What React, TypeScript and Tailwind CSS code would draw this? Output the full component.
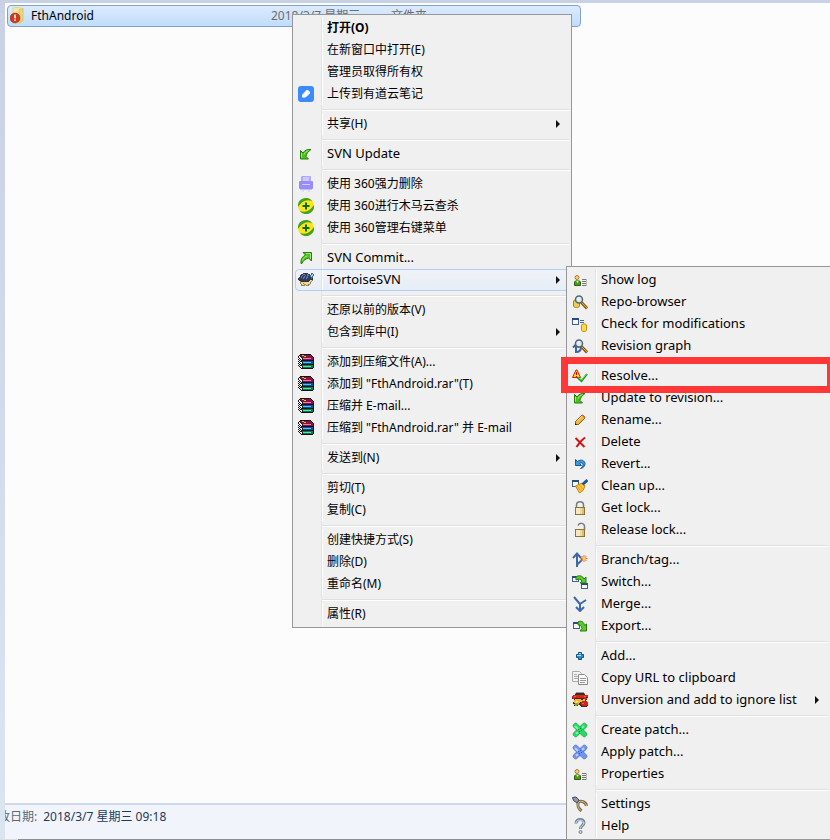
import type { ReactNode } from 'react'
import clsx from 'clsx'

type Item = { label: string; icon?: ReactNode; bold?: boolean; latin?: boolean; arrow?: boolean; sub?: Item[][] }

function Svg({ children }: { children: ReactNode }) {
  return (
    <svg width="16" height="16" viewBox="0 0 16 16" fill="none" aria-hidden="true">{children}</svg>
  )
}

// small bitmap icons: one character per pixel, looked up in a palette
function Pixels({ rows, palette }: { rows: string[]; palette: Record<string, string> }) {
  return (
    <svg width="16" height="16" viewBox="0 0 16 16" shapeRendering="crispEdges" aria-hidden="true">
      {rows.flatMap((row, y) =>
        [...row].map((c, x) => palette[c] && <rect key={`${x}-${y}`} x={x} y={y} width="1" height="1" fill={palette[c]} />),
      )}
    </svg>
  )
}

/* ---------- icons ---------- */

const note = (
  <Svg>
    <rect width="16" height="16" rx="3" fill="#3b8bff" />
    <path d="M4 11.500V9l4.500-5H10l2 2v1.500L7.500 11.500z" fill="#fff" />
  </Svg>
)

const arrowDown = (
  <Svg>
    <path d="M2.500 4.500v8.500h8L8 10.500C8.500 7.500 10 5.500 13 3.500c-4-.5-6.500 1-8 3.500z" fill="#4fc01c" stroke="#23800c" />
    <path d="M3.500 7v4.500M6 8.500C7 6.500 8.500 5 10.500 4.500" stroke="#a2ea74" />
  </Svg>
)

const arrowUp = (
  <Svg>
    <path d="M13.500 11V2.500h-8.500L7.500 5C4.500 6.500 2.500 9 3 13.500h1C5 11 7 9 10.500 8z" fill="#4fc01c" stroke="#23800c" />
    <path d="M12.500 9V3.500H8M4.500 10.500C5.500 8 7 6.500 9.500 6" stroke="#a2ea74" />
  </Svg>
)

const shredder = (
  <Svg>
    <rect x="3" y="0" width="10" height="6" rx="1" fill="#b3a8f8" />
    <rect x="1" y="5" width="14" height="8" rx="1" fill="#9a8cf8" />
    <path d="M5 1h6v4H5z" fill="#cfc7ff" />
    <path d="M4 8.500h8" stroke="#d5ceff" />
    <path d="M2 13h12v1H2z" fill="#c5bcff" />
    <path d="M4 15h2M10 15h2" stroke="#cfc7ff" />
  </Svg>
)

const shield360 = (
  <Svg>
    <circle cx="8" cy="8" r="8" fill="#ffe51a" />
    <path d="M0 9A8 8 0 0 1 14.500 3.500C9 .5 4 3 0 9z" fill="#3fa325" />
    <path d="M16 7A8 8 0 0 1 1.500 12.500C7 15.500 12 13 16 7z" fill="#3fa325" />
    <path d="M8 4.500v7M4.500 8h7" stroke="#0c6b18" strokeWidth="2" />
  </Svg>
)

const tortoise = (
  <Pixels
    palette={{ d: '#2f3c5e', u: '#66779f', t: '#2c6f96', h: '#9fd4ee', k: '#3a3020', c: '#e6d9a8', n: '#9a8148' }}
    rows={[
      '',
      '.....ddddd...tt.',
      '...dduuddudd.tht',
      '..ddudduduudthht',
      '..duddudduddtht.',
      '.dduduuduudddtt.',
      'dddddudduddddtk.',
      'kddddddddddddkk.',
      '.kkddddddddkccn.',
      '..nkkkkkkkkccn..',
      '..ncccccccccn...',
      '..nccnccccccn...',
      '...nccnnccnn....',
      '...nnnn.nnn.....',
    ]}
  />
)

const rar = (
  <Pixels
    palette={{ k: '#141414', m: '#8a1245', p: '#f27ab0', w: '#f4f4f4', y: '#d8c520', b: '#0f4f9f', c: '#5cc0f4', g: '#0b7a4d', l: '#56e6a4' }}
    rows={[
      '..kkkkkkkkkkk...',
      '.kmmyymmmmmmmk..',
      'kwkmmmyymmmmmmk.',
      'kwwkmmmmmmmmmmmk',
      '.kwwkppppppppmmk',
      'kwkwkmmmmmmmmmmk',
      '.kwkkkkkkkkkkkkk',
      'kwkkbbbbbbbbbbbk',
      '.kwwkccccccccbbk',
      'kwkwkbbbbbbbbbbk',
      '.kwkkkkkkkkkkkkk',
      'kwkkgggggggggggk',
      '.kwwkllllllllggk',
      '..kwkggggggggggk',
      '...kkkkkkkkkkkk.',
    ]}
  />
)

const person = (
  <Svg>
    <circle cx="5" cy="5.500" r="2" fill="#f6d080" stroke="#b07a2c" />
    <path d="M2.500 13.500V10l1.500-1.500h3L8.500 10v3.500z" fill="#4f9a20" stroke="#28600c" />
    <path d="M4 8.500l1.500 2.500L7 8.500z" fill="#e8f4d8" />
    <path d="M10 7.500h4M10 9.500h5M10 11.500h4M10 13.500h5" stroke="#777" />
    <path d="M14.500 7v7" stroke="#bbb" />
  </Svg>
)

const glass = (
  <>
    <circle cx="7" cy="5.500" r="3.500" fill="#d5ebfa" stroke="#55636f" strokeWidth="1.500" />
    <path d="M5.500 5.500c0-1 1-2 2-2" stroke="#fff" />
    <path d="M9.500 8.500l5.500 6" stroke="#8b5a14" strokeWidth="3" />
    <path d="M10 9l5 5" stroke="#e2a93c" />
  </>
)

const repo = (
  <Svg>
    <path d="M1.500 7c0-1.500 6-1.500 6 0v5c0 2-6 2-6 0z" fill="#f0cc50" stroke="#a9801a" />
    {glass}
  </Svg>
)

const graph = (
  <Svg>
    <path d="M4 15V7M1 9.500L4 6.500l3 3M4 14c4 0 5-3 5-5" stroke="#3d669f" strokeWidth="2" />
    {glass}
  </Svg>
)

const win = (
  <>
    <rect x=".5" y="2.500" width="6" height="6" fill="#f4f8ff" stroke="#41608f" />
    <path d="M0 3h7" stroke="#2a4a80" strokeWidth="2" />
  </>
)

const check = (
  <Svg>
    {win}
    <path d="M8 4.500h4M8 6.500h4" stroke="#46699c" />
    <path d="M9.500 9c0-1.500 5-1.500 5 0v5c0 2-5 2-5 0z" fill="#ffd84d" stroke="#c39114" />
  </Svg>
)

const resolve = (
  <Svg>
    <path d="M.5 9.500L4 2h1l3.500 7.500z" fill="#ffe600" stroke="#e01010" strokeLinejoin="round" />
    <path d="M4.500 4v3M4.500 8v1" stroke="#d00" />
    <path d="M5.500 9.500l4 3.500 5.500-7" stroke="#0f9e1c" strokeWidth="2" />
    <path d="M6.500 9.500l3 2.500 5-6" stroke="#65e060" />
  </Svg>
)

const pencil = (
  <Svg>
    <path d="M3.500 12.500v-3l6-6c1.500-1 4 1 3 3l-6 6z" fill="#f5b640" stroke="#8f5718" />
    <path d="M5 9l5-5" stroke="#fff0a8" />
    <path d="M10 3.500c1.500-.5 3 1 2.500 2.500z" fill="#d85252" />
    <path d="M3 13v-2l2 2z" fill="#222" />
  </Svg>
)

const del = (
  <Svg>
    <path d="M3.500 4l9 9M13 3.500c-4 3-6 5.500-8.500 9.500" stroke="#cf1414" strokeWidth="2" />
  </Svg>
)

const revert = (
  <Svg>
    <path d="M3.500 3.500v6h6L7.500 7.500C9.500 6 11 7 11 8.500c0 1.500-1 3-2.500 4 3-.5 4.500-2.500 4.500-5S9.500 2.500 5.500 5.500z" fill="#3f9be0" stroke="#155a96" />
  </Svg>
)

const clean = (
  <Svg>
    {win}
    <path d="M3.500 8L10 5l3 3-2 4.500-3.500 2.500z" fill="#ffc83a" stroke="#c68312" />
    <path d="M5.500 8.500l3 4M7.500 7l3 4" stroke="#e39a1c" />
    <path d="M10.500 6.500L15.500 2" stroke="#1e5596" strokeWidth="3" />
  </Svg>
)

const lockBody = (
  <>
    <rect x="3.500" y="7.500" width="9" height="7" fill="#ecd9a4" stroke="#8d7433" />
    <path d="M5 8v6M7 8v6" stroke="#fff8df" />
    <path d="M11 8v6" stroke="#c2a558" />
  </>
)

const lock = (
  <Svg>
    <path d="M4.500 7.500V5C4.500 .5 11.500 .5 11.500 5v2.500" stroke="#777b80" strokeWidth="1.500" />
    {lockBody}
  </Svg>
)

const unlock = (
  <Svg>
    <path d="M6 3.500C7.500 0 12.500 1 12.500 4.500V8" stroke="#777b80" strokeWidth="1.500" />
    {lockBody}
  </Svg>
)

const branch = (
  <Svg>
    <path d="M5 15V3M1 6l4-4.500L9 6M5 13.500c1-4 5-3 5-7" stroke="#3f69a6" strokeWidth="2" />
    <path d="M12 3v7M8.500 6.500h7M9.500 4l5 5M14.500 4l-5 5" stroke="#ff6426" />
    <circle cx="12" cy="6.500" r="1.500" fill="#ffd64a" />
  </Svg>
)

const switchIcon = (
  <Svg>
    <rect x=".5" y="2.500" width="6" height="5" fill="#f4f8ff" stroke="#41608f" />
    <path d="M0 3h7" stroke="#2a4a80" strokeWidth="2" />
    <path d="M4 3C7 .5 11 2 12 5l2-2v6H8l2-2C9 5 7 4.500 4 6z" fill="#5ccc28" stroke="#267d0c" />
    <rect x="9.500" y="9.500" width="6" height="5" fill="#f4f8ff" stroke="#41608f" />
    <path d="M9 10h7" stroke="#2a4a80" strokeWidth="2" />
  </Svg>
)

const merge = (
  <Svg>
    <path d="M2 1l5.500 6.500M14 4L8 8v6.500M4 11l4 4 4-4" stroke="#3f69a6" strokeWidth="2" />
  </Svg>
)

const exportIcon = (
  <Svg>
    <rect x="1.500" y="4.500" width="6" height="6" fill="#f4f8ff" stroke="#41608f" />
    <path d="M1 5h7" stroke="#2a4a80" strokeWidth="2" />
    <path d="M6 4C9 2 12 4 12.500 7.500l2-1.500v7H8l2-2.500C9.500 8 8.500 6.500 6 7z" fill="#5ccc28" stroke="#267d0c" />
  </Svg>
)

const add = (
  <Svg>
    <path d="M6.500 4.500h3v2h2v3h-2v2h-3v-2h-2v-3h2z" fill="#2f93d0" stroke="#12507e" />
    <path d="M7 5.500h2M5 7.500h4" stroke="#a6ddf8" />
  </Svg>
)

const copy = (
  <Svg>
    <path d="M.5 1.500h7l2 2v8h-9z" fill="#f2f2f2" stroke="#aaa" />
    <path d="M2 4.500h3M2 6.500h4M2 8.500h4" stroke="#aaa" />
    <path d="M6.500 4.500h6l3 3v7h-9z" fill="#fafafa" stroke="#8c8c8c" />
    <path d="M8 8.500h6M8 10.500h6M8 12.500h5" stroke="#999" />
  </Svg>
)

const unversion = (
  <Pixels
    palette={{ s: '#9a9a9a', k: '#3c2a24', r: '#d8231a', R: '#f4564a', y: '#f3bb32', a: '#fbe388', g: '#86a824' }}
    rows={[
      '....ssssssss....',
      '...skkkkkkkks...',
      '...kkkkkkkkkk...',
      '.rrrrrrrrrrrrrrr',
      'rrRRrrrrrrrrRRrr',
      'rrrrrrrrrrrrrrkk',
      'krrkkkkkkkkkrrr.',
      '..kyyyyyykkyyrk.',
      '..yyyyyyyyyyyk..',
      '..yyaayyyyrrrrr.',
      '.kyaayyykrrrrrrr',
      '.kkgggykkrRRrrrr',
      '..gggggkkrrrrrrr',
      '..kggk..kkrrrrrk',
      '.........kkkkkk.',
    ]}
  />
)

// two crossed plasters
function Patch({ fill, dark, light }: { fill: string; dark: string; light: string }) {
  return (
    <Svg>
      <rect x="-.5" y="5.500" width="17" height="5" rx="2" transform="rotate(-45 8 8)" fill={fill} stroke={dark} strokeWidth=".5" />
      <rect x="-.5" y="5.500" width="17" height="5" rx="2" transform="rotate(45 8 8)" fill={fill} stroke={dark} strokeWidth=".5" />
      <path d="M3 4l3 3M10 6l2-2M4 12l2-2" stroke={light} strokeWidth="2" />
      <path d="M8 6.500h1M9 8.500h1M7 9.500h1M6 7.500h1" stroke={dark} />
    </Svg>
  )
}

const settings = (
  <Svg>
    <path d="M6 6C9 4.500 14 5.500 14.500 10M6.500 6C5 10 6 12 9.500 15" stroke="#7c6a45" strokeWidth="3" />
    <path d="M6 6C9 4.500 14 5.500 14.500 10M6.500 6C5 10 6 12 9.500 15" stroke="#d9c594" />
    <path d="M.5 1.500l1 3L5 7l2-3-3-3z" fill="#8d9bb0" stroke="#3c4658" />
  </Svg>
)

const help = (
  <Svg>
    <path d="M4 5.500C4 0 12.500 .5 12 5c-.3 2.500-3.500 2.500-3.500 6" stroke="#6f8399" strokeWidth="3" />
    <path d="M4 5c0-4 8-3.500 8 0-.3 2.500-3.500 2.500-3.500 5.500" stroke="#dce7f1" />
    <circle cx="8.500" cy="14" r="1.500" fill="#c5d4e2" stroke="#6f8399" />
  </Svg>
)

/* ---------- menu data, one array per group ---------- */

const svnMenu: Item[][] = [
  [
    { label: 'Show log', icon: person },
    { label: 'Repo-browser', icon: repo },
    { label: 'Check for modifications', icon: check },
    { label: 'Revision graph', icon: graph },
  ],
  [
    { label: 'Resolve...', icon: resolve },
    { label: 'Update to revision...', icon: arrowDown },
    { label: 'Rename...', icon: pencil },
    { label: 'Delete', icon: del },
    { label: 'Revert...', icon: revert },
    { label: 'Clean up...', icon: clean },
    { label: 'Get lock...', icon: lock },
    { label: 'Release lock...', icon: unlock },
  ],
  [
    { label: 'Branch/tag...', icon: branch },
    { label: 'Switch...', icon: switchIcon },
    { label: 'Merge...', icon: merge },
    { label: 'Export...', icon: exportIcon },
  ],
  [
    { label: 'Add...', icon: add },
    { label: 'Copy URL to clipboard', icon: copy },
    { label: 'Unversion and add to ignore list', icon: unversion, arrow: true },
  ],
  [
    { label: 'Create patch...', icon: <Patch fill="#2bd765" dark="#128a3a" light="#7df0a2" /> },
    { label: 'Apply patch...', icon: <Patch fill="#6f95f5" dark="#3558b8" light="#b9cdff" /> },
    { label: 'Properties', icon: person },
  ],
  [
    { label: 'Settings', icon: settings },
    { label: 'Help', icon: help },
  ],
]

const mainMenu: Item[][] = [
  [
    { label: '打开(O)', bold: true },
    { label: '在新窗口中打开(E)' },
    { label: '管理员取得所有权' },
    { label: '上传到有道云笔记', icon: note },
  ],
  [{ label: '共享(H)', arrow: true }],
  [{ label: 'SVN Update', icon: arrowDown, latin: true }],
  [
    { label: '使用 360强力删除', icon: shredder },
    { label: '使用 360进行木马云查杀', icon: shield360 },
    { label: '使用 360管理右键菜单', icon: shield360 },
  ],
  [
    { label: 'SVN Commit...', icon: arrowUp, latin: true },
    { label: 'TortoiseSVN', icon: tortoise, latin: true, arrow: true, sub: svnMenu },
  ],
  [{ label: '还原以前的版本(V)' }, { label: '包含到库中(I)', arrow: true }],
  [
    { label: '添加到压缩文件(A)...', icon: rar },
    { label: '添加到 "FthAndroid.rar"(T)', icon: rar },
    { label: '压缩并 E-mail...', icon: rar },
    { label: '压缩到 "FthAndroid.rar" 并 E-mail', icon: rar },
  ],
  [{ label: '发送到(N)', arrow: true }],
  [{ label: '剪切(T)' }, { label: '复制(C)' }],
  [{ label: '创建快捷方式(S)' }, { label: '删除(D)' }, { label: '重命名(M)' }],
  [{ label: '属性(R)' }],
]

/* ---------- menu ---------- */

function Menu({ groups, className }: { groups: Item[][]; className: string }) {
  return (
    <div role="menu" className={clsx('absolute border border-[#979797] bg-[#f0f0f0] p-0.5', className)}>
      {groups.map((group, i) => (
        <div key={i}>
          {i > 0 && (
            <div role="separator" className="flex h-2 items-end">
              <div className="h-full w-[27px] border-r border-[#e2e3e3]" />
              <div className="mb-0.5 h-0.5 flex-1 border-b border-white bg-[#e0e0e0]" />
            </div>
          )}
          {group.map(item => (
            <div key={item.label} className="relative">
              <button
                role="menuitem"
                className={clsx(
                  'flex h-[22px] w-full items-center text-left',
                  item.sub && 'rounded-sm bg-gradient-to-b from-[#f0f3f8] to-[#e6edf7] outline outline-1 -outline-offset-1 outline-[#aecff7]',
                )}
              >
                <span className="flex h-full w-[27px] shrink-0 items-center border-r border-[#e2e3e3] pl-[3px] shadow-[1px_0_0_#fff]">
                  {item.icon}
                </span>
                <span className={clsx('flex-1 pl-[5px] whitespace-nowrap', item.bold && 'font-bold', item.latin && 'text-[13px]')}>
                  {item.label}
                </span>
                {item.arrow && (
                  <svg width="4" height="8" viewBox="0 0 4 8" className="mr-[9px]" aria-hidden="true">
                    <path d="M0 0l4 4-4 4z" fill="#111" />
                  </svg>
                )}
              </button>
              {item.sub && (
                <>
                  <Menu groups={item.sub} className="-top-[3px] left-[271px] z-10 w-[265px] text-[13px]" />
                  {/* marks the Resolve entry */}
                  <div className="pointer-events-none absolute top-[88px] left-[266px] z-20 h-9 w-[273px] border-[7px] border-[#ff3737]" />
                </>
              )}
            </div>
          ))}
        </div>
      ))}
    </div>
  )
}

export default function App() {
  return (
    <div className="relative flex min-h-screen flex-col overflow-hidden bg-[#fcfcfc] font-['Noto_Sans','Noto_Sans_CJK_SC',sans-serif] text-xs text-black">
      <div className="h-[3px] bg-[#c9d1e4]" />
      <div className="flex flex-1">
        <div className="w-[5px] bg-gradient-to-b from-[#c9d1e4] to-[#dbe5f2]" />
        <div className="flex flex-1 flex-col">
          <main className="flex-1 px-0.5 pt-0.5">
            <div className="flex h-[22px] w-[574px] items-center rounded-sm border border-[#7da2ce] bg-gradient-to-b from-[#dcebfd] to-[#c1dcfc] pl-0.5">
              <svg width="16" height="18" viewBox="0 0 16 18" aria-hidden="true">
                <path d="M3 1l7-1v16H3z" fill="#f6e7a0" stroke="#e6d384" />
                <path d="M9 3l4-2v13l-4 2z" fill="#ecd57c" stroke="#dcc468" />
                <circle cx="5" cy="11" r="5" fill="#cf3a1e" stroke="#8f2412" strokeWidth=".5" />
                <path d="M5 7.500v4M5 12.500v1.500" stroke="#fff" strokeWidth="1.500" />
              </svg>
              <span className="w-[245px] pl-[5px]">FthAndroid</span>
              <span className="w-[120px] text-[#6d6d6d]">2018/3/7 星期三</span>
              <span className="text-[#6d6d6d]">文件夹</span>
            </div>
          </main>
          <footer className="flex h-9 items-start overflow-hidden border-t-2 border-[#cdd8ea] bg-[#f1f5fb] pt-1">
            <dl className="-ml-[7px] flex gap-1.5 text-[#1e395b]">
              <dt className="text-[#5a6779]">改日期:</dt>
              <dd>2018/3/7 星期三 09:18</dd>
            </dl>
          </footer>
        </div>
      </div>
      <div className="flex h-px bg-[#8f8f8f]">
        <div className="w-[18px] bg-[#dcdcdc]" />
      </div>
      <Menu groups={mainMenu} className="top-[14px] left-[292px] w-[280px]" />
    </div>
  )
}
